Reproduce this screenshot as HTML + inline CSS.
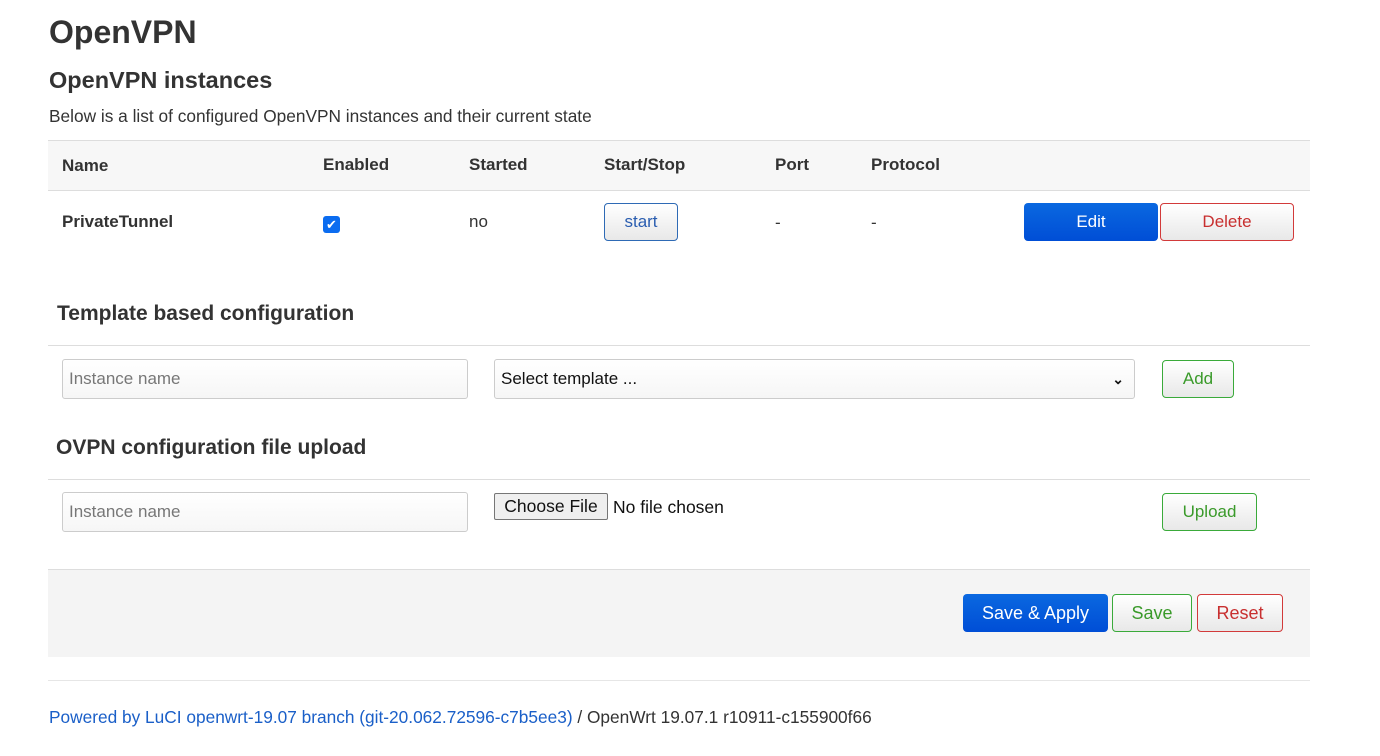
<!DOCTYPE html>
<html><head><meta charset="utf-8"><style>
body{margin:0;width:1380px;height:756px;background:#fff;font-family:"Liberation Sans",Arial,sans-serif;color:#404040;position:relative;overflow:hidden}
.a{position:absolute;white-space:nowrap}
.b{font-weight:bold;color:#333}
.btn{position:absolute;box-sizing:border-box;border-radius:4px;text-align:center;font-size:17px;background:linear-gradient(#fff,#e8e8e8)}
.in{position:absolute;box-sizing:border-box;border:1px solid #ccc;border-radius:3px;font-size:17px;color:#777;padding-left:6px;background:linear-gradient(#fff,#f6f6f6)}
.hr{position:absolute;left:48px;width:1262px;height:1px;background:#ddd}
</style></head><body>
<div class="a b" style="left:49px;top:14px;font-size:32px">OpenVPN</div>
<div class="a b" style="left:49px;top:67px;font-size:23.5px">OpenVPN instances</div>
<div class="a" style="left:49px;top:106px;font-size:17.3px;color:#333">Below is a list of configured OpenVPN instances and their current state</div>
<div style="position:absolute;left:48px;top:140px;width:1262px;height:49px;background:#f7f7f7;border-top:1px solid #ddd;border-bottom:1px solid #ddd"></div>
<div class="a b" style="left:62px;top:156px;font-size:17px">Name</div>
<div class="a b" style="left:323px;top:155px;font-size:17px">Enabled</div>
<div class="a b" style="left:469px;top:155px;font-size:17px">Started</div>
<div class="a b" style="left:604px;top:155px;font-size:17px">Start/Stop</div>
<div class="a b" style="left:775px;top:155px;font-size:17px">Port</div>
<div class="a b" style="left:871px;top:155px;font-size:17px">Protocol</div>
<div class="a b" style="left:62px;top:212px;font-size:17px">PrivateTunnel</div>
<div class="a" style="left:323px;top:216px;width:17px;height:17px;background:#0b6cf0;border-radius:3px;color:#fff;font-size:13px;line-height:17px;text-align:center">✔</div>
<div class="a" style="left:469px;top:212px;font-size:17px;color:#333">no</div>
<div class="btn" style="left:604px;top:203px;width:74px;height:38px;border:1px solid #2e6ab5;color:#2a5db0;line-height:36px">start</div>
<div class="a" style="left:775px;top:213px;font-size:17px;color:#333">-</div>
<div class="a" style="left:871px;top:213px;font-size:17px;color:#333">-</div>
<div class="btn" style="left:1024px;top:203px;width:134px;height:38px;background:linear-gradient(#0a68e0,#004ed6);color:#fff;line-height:38px">Edit</div>
<div class="btn" style="left:1160px;top:203px;width:134px;height:38px;border:1px solid #d23a3a;color:#c82f2f;line-height:36px">Delete</div>
<div class="a b" style="left:57px;top:302px;font-size:21px">Template based configuration</div>
<div class="hr" style="top:345px"></div>
<div class="in" style="left:62px;top:359px;width:406px;height:40px;line-height:38px">Instance name</div>
<div class="in" style="left:494px;top:359px;width:641px;height:40px;line-height:38px;color:#111">Select template ...<span style="position:absolute;right:10px;top:0;font-size:14px;font-weight:bold">⌄</span></div>
<div class="btn" style="left:1162px;top:360px;width:72px;height:38px;border:1px solid #3aaa3a;color:#3a9a2a;line-height:36px">Add</div>
<div class="a b" style="left:56px;top:436px;font-size:21px">OVPN configuration file upload</div>
<div class="hr" style="top:479px"></div>
<div class="in" style="left:62px;top:492px;width:406px;height:40px;line-height:38px">Instance name</div>
<div class="a" style="left:494px;top:493px;width:114px;height:27px;box-sizing:border-box;border:1px solid #767676;background:#efefef;border-radius:2px;font-size:17.5px;color:#111;text-align:center;line-height:25px">Choose File</div>
<div class="a" style="left:613px;top:497px;font-size:17.5px;color:#111">No file chosen</div>
<div class="btn" style="left:1162px;top:493px;width:95px;height:38px;border:1px solid #3aaa3a;color:#3a9a2a;line-height:36px">Upload</div>
<div style="position:absolute;left:48px;top:569px;width:1262px;height:87px;background:#f4f4f4;border-top:1px solid #ddd"></div>
<div class="btn" style="left:963px;top:594px;width:145px;height:38px;background:linear-gradient(#0a68e0,#004ed6);color:#fff;line-height:38px;font-size:18px">Save &amp; Apply</div>
<div class="btn" style="left:1112px;top:594px;width:80px;height:38px;border:1px solid #3aaa3a;color:#3a9a2a;line-height:36px;font-size:18px">Save</div>
<div class="btn" style="left:1197px;top:594px;width:86px;height:38px;border:1px solid #d23a3a;color:#c82f2f;line-height:36px;font-size:18px">Reset</div>
<div class="hr" style="top:680px;background:#e6e6e6"></div>
<div class="a" style="left:49px;top:707px;font-size:17.3px;color:#333"><span style="color:#1a5fc8">Powered by LuCI openwrt-19.07 branch (git-20.062.72596-c7b5ee3)</span> / OpenWrt 19.07.1 r10911-c155900f66</div>
</body></html>
